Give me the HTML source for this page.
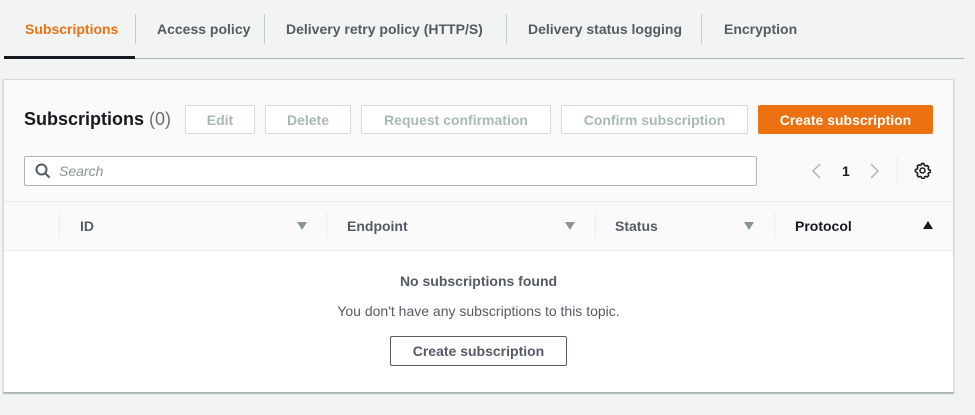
<!DOCTYPE html>
<html><head><style>
*{box-sizing:border-box;margin:0;padding:0}
body{width:975px;height:415px;background:#f2f3f3;font-family:"Liberation Sans",sans-serif;position:relative;overflow:hidden;color:#16191f}
.a{position:absolute}
.tab{position:absolute;top:21px;font-size:14px;font-weight:bold;color:#545b64;white-space:nowrap}
.sep{position:absolute;top:14px;width:1px;height:30px;background:#c5cccd}
.btn{position:absolute;top:105px;height:29px;border:1px solid #d5dbdb;background:#fff;color:#aab7b8;font-weight:bold;font-size:14px;text-align:center;line-height:28px;border-radius:2px}
.th{position:absolute;top:218px;font-size:14px;font-weight:bold;color:#545b64}
.tri{position:absolute;top:222px;width:0;height:0;border-left:5px solid transparent;border-right:5px solid transparent;border-top:8px solid #879596}
.cs{position:absolute;top:212px;width:1px;height:27px;background:#eaeded}
</style></head><body>
<div class="tab" style="left:25px;color:#ec7211">Subscriptions</div>
<div class="sep" style="left:135px"></div>
<div class="tab" style="left:157px">Access policy</div>
<div class="sep" style="left:264px"></div>
<div class="tab" style="left:286px">Delivery retry policy (HTTP/S)</div>
<div class="sep" style="left:506px"></div>
<div class="tab" style="left:528px">Delivery status logging</div>
<div class="sep" style="left:701px"></div>
<div class="tab" style="left:724px">Encryption</div>
<div class="a" style="left:4px;top:58px;width:960px;height:1px;background:#aab7b8"></div>
<div class="a" style="left:4px;top:56px;width:131px;height:3px;background:#16191f"></div>

<div class="a" style="left:3px;top:79px;width:951px;height:314px;background:#fafafa;border:1px solid #d5dbdb;border-bottom:1px solid #aab7b8;box-shadow:0 1px 1px rgba(0,28,36,.3)"></div>
<div class="a" style="left:4px;top:250px;width:949px;height:142px;background:#fff"></div>
<div class="a" style="left:4px;top:201px;width:949px;height:1px;background:#eaeded"></div>
<div class="a" style="left:4px;top:250px;width:949px;height:1px;background:#eaeded"></div>

<div class="a" style="left:24px;top:109px;font-size:18px;font-weight:bold">Subscriptions <span style="font-weight:normal;color:#687078">(0)</span></div>
<div class="btn" style="left:185px;width:70px">Edit</div>
<div class="btn" style="left:265px;width:86px">Delete</div>
<div class="btn" style="left:361px;width:190px">Request confirmation</div>
<div class="btn" style="left:561px;width:187px">Confirm subscription</div>
<div class="btn" style="left:758px;width:175px;background:#ec7211;border-color:#ec7211;color:#fff">Create subscription</div>

<div class="a" style="left:24px;top:156px;width:733px;height:30px;background:#fff;border:1px solid #aab7b8;border-radius:2px"></div>
<svg class="a" style="left:35px;top:163px" width="16" height="16" viewBox="0 0 16 16"><circle cx="6.5" cy="6.5" r="5" fill="none" stroke="#545b64" stroke-width="2"/><line x1="10" y1="10" x2="14.5" y2="14.5" stroke="#545b64" stroke-width="2"/></svg>
<div class="a" style="left:59px;top:163px;font-size:14px;font-style:italic;color:#879596">Search</div>

<svg class="a" style="left:810px;top:162px" width="12" height="18"><polyline points="10,2 3,9 10,16" fill="none" stroke="#aab7b8" stroke-width="1.5"/></svg>
<div class="a" style="left:842px;top:163px;font-size:14px;font-weight:bold">1</div>
<svg class="a" style="left:869px;top:162px" width="12" height="18"><polyline points="2,2 9,9 2,16" fill="none" stroke="#aab7b8" stroke-width="1.5"/></svg>
<div class="a" style="left:897px;top:156px;width:1px;height:30px;background:#eaeded"></div>
<svg class="a" style="left:914px;top:162px" width="17" height="17" viewBox="0 0 24 24"><path d="M12 2l2 .3.6 2.4 1.8 1 2.3-.8 2 2-.8 2.3 1 1.8 2.4.6v2.8l-2.4.6-1 1.8.8 2.3-2 2-2.3-.8-1.8 1-.6 2.4h-2.8l-.6-2.4-1.8-1-2.3.8-2-2 .8-2.3-1-1.8L2 13.4v-2.8l2.4-.6 1-1.8-.8-2.3 2-2 2.3.8 1.8-1L10.6 2.3z" fill="none" stroke="#16191f" stroke-width="2.2" stroke-linejoin="round"/><circle cx="12" cy="12" r="3.5" fill="none" stroke="#16191f" stroke-width="2.2"/></svg>

<div class="cs" style="left:59px"></div>
<div class="th" style="left:80px">ID</div>
<div class="tri" style="left:297px"></div>
<div class="cs" style="left:326px"></div>
<div class="th" style="left:347px">Endpoint</div>
<div class="tri" style="left:565px"></div>
<div class="cs" style="left:595px"></div>
<div class="th" style="left:615px">Status</div>
<div class="tri" style="left:744px"></div>
<div class="cs" style="left:774px"></div>
<div class="th" style="left:795px;color:#16191f">Protocol</div>
<div class="a" style="left:923px;top:221px;width:0;height:0;border-left:5px solid transparent;border-right:5px solid transparent;border-bottom:8px solid #16191f"></div>

<div class="a" style="left:4px;top:273px;width:949px;text-align:center;font-size:14px;font-weight:bold;color:#545b64">No subscriptions found</div>
<div class="a" style="left:4px;top:303px;width:949px;text-align:center;font-size:14px;color:#545b64">You don't have any subscriptions to this topic.</div>
<div class="a" style="left:390px;top:336px;width:177px;height:30px;border:1px solid #545b64;background:#fff;border-radius:2px;text-align:center;line-height:29px;font-size:14px;font-weight:bold;color:#545b64">Create subscription</div>
</body></html>
